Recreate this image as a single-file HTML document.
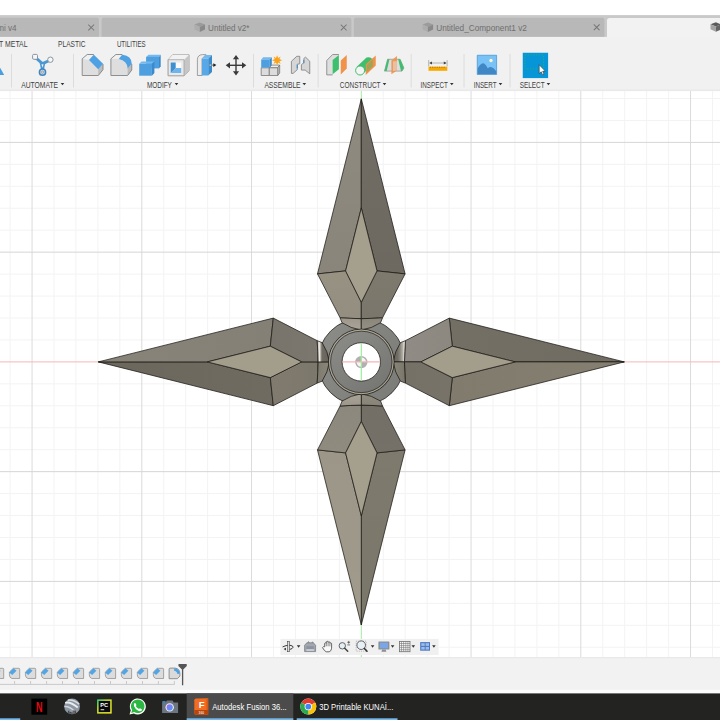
<!DOCTYPE html>
<html lang="en">
<head>
<meta charset="utf-8">
<title>Autodesk Fusion 360</title>
<style>
html,body{margin:0;padding:0;background:#fff}
body{width:720px;height:720px;overflow:hidden;position:relative;font-family:"Liberation Sans",sans-serif}
svg{position:absolute;left:0;top:0;display:block}
text{font-family:"Liberation Sans",sans-serif}
.lbl{font-size:8.2px;fill:#3e3e3e}
.tab{font-size:9px;fill:#6f6f6f}
.task{font-size:9.2px;fill:#fff}
</style>
</head>
<body>
<svg width="720" height="720" viewBox="0 0 720 720">

<rect x="0" y="0" width="720" height="720" fill="#fff"/>
<g id="grid" fill="none" stroke-width="1">
<path d="M10.1 91V658M54 91V658M75.95 91V658M97.9 91V658M119.85 91V658M163.75 91V658M185.7 91V658M207.65 91V658M229.6 91V658M273.5 91V658M295.45 91V658M317.4 91V658M339.35 91V658M383.25 91V658M405.2 91V658M427.15 91V658M449.1 91V658M493 91V658M514.95 91V658M536.9 91V658M558.85 91V658M602.75 91V658M624.7 91V658M646.65 91V658M668.6 91V658M712.5 91V658" stroke="#f3f3f3"/>
<path d="M0 98.5H720M0 120.45H720M0 164.35H720M0 186.3H720M0 208.25H720M0 230.2H720M0 274.1H720M0 296.05H720M0 318H720M0 339.95H720M0 383.85H720M0 405.8H720M0 427.75H720M0 449.7H720M0 493.6H720M0 515.55H720M0 537.5H720M0 559.45H720M0 603.35H720M0 625.3H720M0 647.25H720" stroke="#f3f3f3"/>
<path d="M32.05 91V658M141.8 91V658M251.55 91V658M471.05 91V658M580.8 91V658M690.55 91V658" stroke="#dbdbdb"/>
<path d="M0 142.4H720M0 252.15H720M0 471.65H720M0 581.4H720" stroke="#d6d6d6"/>
</g>
<path d="M0 361.9H720" stroke="#f4b8b8" stroke-width="1" fill="none"/>
<path d="M361.3 91V658" stroke="#a6e8a6" stroke-width="1" fill="none"/>
<defs>
<linearGradient id="ringg" x1="0.1" y1="0" x2="0.9" y2="1"><stop offset="0" stop-color="#8c8c89"/><stop offset="0.5" stop-color="#80807d"/><stop offset="1" stop-color="#747471"/></linearGradient>
<linearGradient id="colg" x1="0" y1="0.2" x2="1" y2="0.8"><stop offset="0" stop-color="#8b8b88"/><stop offset="1" stop-color="#7b7b78"/></linearGradient>
<linearGradient id="tOL" gradientUnits="userSpaceOnUse" x1="0" y1="-263" x2="0" y2="-88"><stop offset="0" stop-color="#8f8b80"/><stop offset="1" stop-color="#89857a"/></linearGradient>
<linearGradient id="tOR" gradientUnits="userSpaceOnUse" x1="0" y1="-263" x2="0" y2="-88"><stop offset="0" stop-color="#716d64"/><stop offset="1" stop-color="#6d6960"/></linearGradient>
<linearGradient id="tIL" gradientUnits="userSpaceOnUse" x1="0" y1="-92" x2="0" y2="-44"><stop offset="0" stop-color="#989283"/><stop offset="1" stop-color="#938e80"/></linearGradient>
<linearGradient id="tIR" gradientUnits="userSpaceOnUse" x1="0" y1="-92" x2="0" y2="-44"><stop offset="0" stop-color="#7f7a6e"/><stop offset="1" stop-color="#7a766b"/></linearGradient>
<linearGradient id="tFL" gradientUnits="userSpaceOnUse" x1="0" y1="-44.5" x2="0" y2="-32.5"><stop offset="0" stop-color="#9c978a"/><stop offset="1" stop-color="#aaa598"/></linearGradient>
<linearGradient id="tFR" gradientUnits="userSpaceOnUse" x1="0" y1="-44.5" x2="0" y2="-32.5"><stop offset="0" stop-color="#8a8579"/><stop offset="1" stop-color="#959084"/></linearGradient>
<linearGradient id="rOL" gradientUnits="userSpaceOnUse" x1="0" y1="-263" x2="0" y2="-88"><stop offset="0" stop-color="#706c62"/><stop offset="1" stop-color="#736f65"/></linearGradient>
<linearGradient id="rOR" gradientUnits="userSpaceOnUse" x1="0" y1="-263" x2="0" y2="-88"><stop offset="0" stop-color="#857f71"/><stop offset="1" stop-color="#817b6e"/></linearGradient>
<linearGradient id="rIL" gradientUnits="userSpaceOnUse" x1="0" y1="-92" x2="0" y2="-44"><stop offset="0" stop-color="#8c8880"/><stop offset="1" stop-color="#908c85"/></linearGradient>
<linearGradient id="rIR" gradientUnits="userSpaceOnUse" x1="0" y1="-92" x2="0" y2="-44"><stop offset="0" stop-color="#787368"/><stop offset="1" stop-color="#767166"/></linearGradient>
<linearGradient id="rFL" gradientUnits="userSpaceOnUse" x1="0" y1="-44.5" x2="0" y2="-32.5"><stop offset="0" stop-color="#c4c1b9"/><stop offset="0.12" stop-color="#eeece7"/><stop offset="0.26" stop-color="#b3b0a6"/><stop offset="0.47" stop-color="#8a867c"/><stop offset="0.7" stop-color="#6f6c64"/><stop offset="1" stop-color="#6a675f"/></linearGradient>
<linearGradient id="rFR" gradientUnits="userSpaceOnUse" x1="0" y1="-44.5" x2="0" y2="-32.5"><stop offset="0" stop-color="#7a7569"/><stop offset="1" stop-color="#8a8579"/></linearGradient>
<linearGradient id="bOL" gradientUnits="userSpaceOnUse" x1="0" y1="-263" x2="0" y2="-88"><stop offset="0" stop-color="#7b766a"/><stop offset="1" stop-color="#7f7a6e"/></linearGradient>
<linearGradient id="bOR" gradientUnits="userSpaceOnUse" x1="0" y1="-263" x2="0" y2="-88"><stop offset="0" stop-color="#a09b8c"/><stop offset="1" stop-color="#9b9687"/></linearGradient>
<linearGradient id="bIL" gradientUnits="userSpaceOnUse" x1="0" y1="-92" x2="0" y2="-44"><stop offset="0" stop-color="#767168"/><stop offset="1" stop-color="#736f66"/></linearGradient>
<linearGradient id="bIR" gradientUnits="userSpaceOnUse" x1="0" y1="-92" x2="0" y2="-44"><stop offset="0" stop-color="#8f8b7f"/><stop offset="1" stop-color="#8c887d"/></linearGradient>
<linearGradient id="bFL" gradientUnits="userSpaceOnUse" x1="0" y1="-44.5" x2="0" y2="-32.5"><stop offset="0" stop-color="#878276"/><stop offset="1" stop-color="#918c80"/></linearGradient>
<linearGradient id="bFR" gradientUnits="userSpaceOnUse" x1="0" y1="-44.5" x2="0" y2="-32.5"><stop offset="0" stop-color="#9b9689"/><stop offset="1" stop-color="#a8a396"/></linearGradient>
<linearGradient id="lOL" gradientUnits="userSpaceOnUse" x1="0" y1="-263" x2="0" y2="-88"><stop offset="0" stop-color="#6b675d"/><stop offset="1" stop-color="#6f6b61"/></linearGradient>
<linearGradient id="lOR" gradientUnits="userSpaceOnUse" x1="0" y1="-263" x2="0" y2="-88"><stop offset="0" stop-color="#88847a"/><stop offset="1" stop-color="#848075"/></linearGradient>
<linearGradient id="lIL" gradientUnits="userSpaceOnUse" x1="0" y1="-92" x2="0" y2="-44"><stop offset="0" stop-color="#807b6e"/><stop offset="1" stop-color="#7d786c"/></linearGradient>
<linearGradient id="lIR" gradientUnits="userSpaceOnUse" x1="0" y1="-92" x2="0" y2="-44"><stop offset="0" stop-color="#78746b"/><stop offset="1" stop-color="#7b776e"/></linearGradient>
<linearGradient id="lFL" gradientUnits="userSpaceOnUse" x1="0" y1="-44.5" x2="0" y2="-32.5"><stop offset="0" stop-color="#7f7a6e"/><stop offset="1" stop-color="#8b867a"/></linearGradient>
<linearGradient id="lFR" gradientUnits="userSpaceOnUse" x1="0" y1="-44.5" x2="0" y2="-32.5"><stop offset="0" stop-color="#807c72"/><stop offset="0.11" stop-color="#cdcac2"/><stop offset="0.24" stop-color="#ecebe5"/><stop offset="0.34" stop-color="#a5a198"/><stop offset="0.43" stop-color="#706c64"/><stop offset="1" stop-color="#67635c"/></linearGradient>
</defs>
<g id="model">
<circle cx="361.3" cy="361.9" r="43.5" fill="url(#colg)" stroke="#1c1a16" stroke-width="0.75"/>
<g id="arm-top" transform="translate(361.3 361.9) rotate(0)" stroke="#1c1a16" stroke-width="0.75" stroke-linejoin="round"><path d="M0 -263 L-43.8 -88 L-15.7 -91 L0 -154 Z" fill="url(#tOL)"/><path d="M0 -263 L43.8 -88 L15.7 -91 L0 -154 Z" fill="url(#tOR)"/><path d="M-43.8 -88 L-21.2 -44.1 Q-10.6 -43.400000000000006 0 -43.2 L0 -59.6 L-15.7 -91 Z" fill="url(#tIL)"/><path d="M43.8 -88 L21.2 -44.1 Q10.6 -43.400000000000006 0 -43.2 L0 -59.6 L15.7 -91 Z" fill="url(#tIR)"/><path d="M0 -154 L-15.7 -91 L0 -59.6 L15.7 -91 Z" fill="#a59f8e"/><path d="M-21.2 -44.1 Q-10.6 -43.400000000000006 0 -43.2 L0 -31.9 Q-10.5 -33.35 -19.3 -39.2 Z" fill="url(#tFL)"/><path d="M21.2 -44.1 Q10.6 -43.400000000000006 0 -43.2 L0 -31.9 Q10.5 -33.35 19.3 -39.2 Z" fill="url(#tFR)"/></g>
<g id="arm-right" transform="translate(361.3 361.9) rotate(90)" stroke="#1c1a16" stroke-width="0.75" stroke-linejoin="round"><path d="M0 -263 L-43.8 -88 L-15.7 -91 L0 -154 Z" fill="url(#rOL)"/><path d="M0 -263 L43.8 -88 L15.7 -91 L0 -154 Z" fill="url(#rOR)"/><path d="M-43.8 -88 L-21.2 -44.1 Q-10.6 -43.400000000000006 0 -43.2 L0 -59.6 L-15.7 -91 Z" fill="url(#rIL)"/><path d="M43.8 -88 L21.2 -44.1 Q10.6 -43.400000000000006 0 -43.2 L0 -59.6 L15.7 -91 Z" fill="url(#rIR)"/><path d="M0 -154 L-15.7 -91 L0 -59.6 L15.7 -91 Z" fill="#a39d8c"/><path d="M-21.2 -44.1 Q-10.6 -43.400000000000006 0 -43.2 L0 -31.9 Q-10.5 -33.35 -19.3 -39.2 Z" fill="url(#rFL)"/><path d="M21.2 -44.1 Q10.6 -43.400000000000006 0 -43.2 L0 -31.9 Q10.5 -33.35 19.3 -39.2 Z" fill="url(#rFR)"/></g>
<g id="arm-bottom" transform="translate(361.3 361.9) rotate(180)" stroke="#1c1a16" stroke-width="0.75" stroke-linejoin="round"><path d="M0 -263 L-43.8 -88 L-15.7 -91 L0 -154 Z" fill="url(#bOL)"/><path d="M0 -263 L43.8 -88 L15.7 -91 L0 -154 Z" fill="url(#bOR)"/><path d="M-43.8 -88 L-21.2 -44.1 Q-10.6 -43.400000000000006 0 -43.2 L0 -59.6 L-15.7 -91 Z" fill="url(#bIL)"/><path d="M43.8 -88 L21.2 -44.1 Q10.6 -43.400000000000006 0 -43.2 L0 -59.6 L15.7 -91 Z" fill="url(#bIR)"/><path d="M0 -154 L-15.7 -91 L0 -59.6 L15.7 -91 Z" fill="#a59f8e"/><path d="M-21.2 -44.1 Q-10.6 -43.400000000000006 0 -43.2 L0 -31.9 Q-10.5 -33.35 -19.3 -39.2 Z" fill="url(#bFL)"/><path d="M21.2 -44.1 Q10.6 -43.400000000000006 0 -43.2 L0 -31.9 Q10.5 -33.35 19.3 -39.2 Z" fill="url(#bFR)"/></g>
<g id="arm-left" transform="translate(361.3 361.9) rotate(270)" stroke="#1c1a16" stroke-width="0.75" stroke-linejoin="round"><path d="M0 -263 L-43.8 -88 L-15.7 -91 L0 -154 Z" fill="url(#lOL)"/><path d="M0 -263 L43.8 -88 L15.7 -91 L0 -154 Z" fill="url(#lOR)"/><path d="M-43.8 -88 L-21.2 -44.1 Q-10.6 -43.400000000000006 0 -43.2 L0 -59.6 L-15.7 -91 Z" fill="url(#lIL)"/><path d="M43.8 -88 L21.2 -44.1 Q10.6 -43.400000000000006 0 -43.2 L0 -59.6 L15.7 -91 Z" fill="url(#lIR)"/><path d="M0 -154 L-15.7 -91 L0 -59.6 L15.7 -91 Z" fill="#a39d8c"/><path d="M-21.2 -44.1 Q-10.6 -43.400000000000006 0 -43.2 L0 -31.9 Q-10.5 -33.35 -19.3 -39.2 Z" fill="url(#lFL)"/><path d="M21.2 -44.1 Q10.6 -43.400000000000006 0 -43.2 L0 -31.9 Q10.5 -33.35 19.3 -39.2 Z" fill="url(#lFR)"/></g>
<circle cx="361.3" cy="361.9" r="32.8" fill="url(#ringg)" stroke="#1c1a16" stroke-width="0.75"/>
<circle cx="361.3" cy="361.9" r="31.7" fill="none" stroke="#b7af93" stroke-width="0.9"/>
<circle cx="361.3" cy="361.9" r="30.7" fill="none" stroke="#1c1a16" stroke-width="0.6"/>
<circle cx="361.3" cy="361.9" r="19.2" fill="#fff" stroke="#1c1a16" stroke-width="0.75"/>
<circle cx="361.3" cy="362.1" r="6.2" fill="#a2a2a2" fill-opacity="0.85"/>
<path d="M361.3 362.1 h-4.7 a4.7 4.7 0 0 0 4.7 4.7z M361.3 362.1 h4.7 a4.7 4.7 0 0 0 -4.7 -4.7z" fill="#fafafa" fill-opacity="0.95"/>
<path d="M342.5 361.9H380.1" stroke="#f7b4b8" stroke-width="1.3" fill="none"/>
<path d="M361.3 343.1V380.7" stroke="#9eea9e" stroke-width="1.2" fill="none"/>
</g>
<!-- ================= top chrome ================= -->
<g id="topchrome">
<rect x="0" y="0" width="720" height="15.2" fill="#fff"/>
<rect x="0" y="15.1" width="720" height="22" fill="#c9c9c9"/>
<path d="M0 37V17.700H97a2 2 0 0 1 2 2V37Z" fill="#b8b8b8"/>
<path d="M101.600 37V19.700a2 2 0 0 1 2 -2H349.400a2 2 0 0 1 2 2V37Z" fill="#b8b8b8"/>
<path d="M353.800 37V19.700a2 2 0 0 1 2 -2H602.400a2 2 0 0 1 2 2V37Z" fill="#b8b8b8"/>
<rect x="0" y="36.9" width="720" height="54.1" fill="#f1f1f1"/>
<path d="M607 37V20.500a2.600 2.600 0 0 1 2.600 -2.600H720V37Z" fill="#f2f2f2"/>
<rect x="0" y="89.600" width="720" height="1.500" fill="#e9e9e9"/>
<!-- tab labels -->
<text class="tab" x="-2.8" y="30.6" textLength="19.3" lengthAdjust="spacingAndGlyphs">mi v4</text>
<text class="tab" x="208.1" y="30.6" textLength="41.3" lengthAdjust="spacingAndGlyphs">Untitled v2*</text>
<text class="tab" x="436.2" y="30.6" textLength="90.7" lengthAdjust="spacingAndGlyphs">Untitled_Component1 v2</text>
<!-- tab close marks -->
<g stroke="#777" stroke-width="1.05" fill="none" stroke-linecap="square">
<path d="M88.7 25l5 5M93.700 25l-5 5"/>
<path d="M341.2 25l5 5M346.200 25l-5 5"/>
<path d="M594.2 24.800l5 5M599.200 24.800l-5 5"/>
</g>
<!-- tab cube glyphs -->
<g id="cubeA" stroke="none">
<path d="M194.400 24.600l5.400-2.100 5.200 2.100-5.200 2.300z" fill="#9b9b9b"/>
<path d="M194.400 24.600l5.400 2.300v5l-5.400-2.400z" fill="#adadad"/>
<path d="M199.800 26.900l5.200-2.300v4.900l-5.200 2.400z" fill="#898989"/>
</g>
<g stroke="none">
<path d="M422.500 24.600l5.400-2.100 5.200 2.100-5.200 2.300z" fill="#9b9b9b"/>
<path d="M422.500 24.600l5.400 2.300v5l-5.400-2.400z" fill="#adadad"/>
<path d="M427.900 26.900l5.200-2.300v4.900l-5.200 2.400z" fill="#898989"/>
</g>
<g stroke="none">
<path d="M710.500 24.300l5.400-2 5.200 2-5.200 2.200z" fill="#5c5c5c"/>
<path d="M710.500 24.300l5.400 2.200v5.200l-5.400-2.400z" fill="#a4a4a4"/>
<path d="M715.900 26.500l5.200-2.200v5.100l-5.200 2.300z" fill="#666"/>
</g>
<!-- ribbon tab names -->
<text class="lbl" x="-19.600" y="46.900" textLength="47.1" lengthAdjust="spacingAndGlyphs">SHEET METAL</text>
<text class="lbl" x="58.1" y="46.900" textLength="27.5" lengthAdjust="spacingAndGlyphs">PLASTIC</text>
<text class="lbl" x="116.900" y="46.900" textLength="28.7" lengthAdjust="spacingAndGlyphs">UTILITIES</text>
<!-- separators -->
<path d="M11.5 54V87.500M73.500 54V87.500M253.500 54V87.500M318.100 54V87.500M411.200 54V87.500M464 54V87.500M510 54V87.500" stroke="#dcdcdc" stroke-width="1" fill="none"/>
<!-- panel labels -->
<g class="lbl">
<text x="21.2" y="87.5" textLength="36.9" lengthAdjust="spacingAndGlyphs">AUTOMATE</text>
<text x="146.900" y="87.5" textLength="25" lengthAdjust="spacingAndGlyphs">MODIFY</text>
<text x="264.400" y="87.5" textLength="36.2" lengthAdjust="spacingAndGlyphs">ASSEMBLE</text>
<text x="339.700" y="87.5" textLength="40.9" lengthAdjust="spacingAndGlyphs">CONSTRUCT</text>
<text x="420.600" y="87.5" textLength="27.2" lengthAdjust="spacingAndGlyphs">INSPECT</text>
<text x="473.700" y="87.5" textLength="22.8" lengthAdjust="spacingAndGlyphs">INSERT</text>
<text x="519.700" y="87.5" textLength="24.9" lengthAdjust="spacingAndGlyphs">SELECT</text>
</g>
<!-- dropdown carets -->
<path d="M60.700 83.1h3.600l-1.800 2.100zM174.700 83.1h3.600l-1.800 2.100zM302.500 83.1h3.600l-1.800 2.100zM382.700 83.1h3.600l-1.800 2.100zM450 83.1h3.600l-1.800 2.100zM498.700 83.1h3.600l-1.800 2.100zM546.600 83.1h3.600l-1.800 2.100z" fill="#333"/>
</g>

<!-- ================= ribbon icons ================= -->
<g id="ribbon-icons" stroke-linejoin="round">
<!-- partially visible icon at left edge -->
<path d="M-2 64L4.200 75.100H-2Z" fill="#4a9fe0"/>
<!-- automate -->
<g>
<path d="M35.500 57.600L42.500 63.600L50 60.200" stroke="#4a97d2" stroke-width="2.800" fill="none"/>
<path d="M39.600 62.400h5.800l-1.500 7.600h-2.800z" fill="#4a97d2"/>
<path d="M41.500 64.300h2l-1 3.500z" fill="#eef4fa"/>
<rect x="32.600" y="54.400" width="4.900" height="4.900" rx="1.100" fill="#f7f7f7" stroke="#7f8b97" stroke-width="0.9"/>
<circle cx="50.400" cy="59.700" r="2.700" fill="#f7f7f7" stroke="#7f8b97" stroke-width="0.9"/>
<circle cx="42.500" cy="72.200" r="3.100" fill="#cfd6dd" stroke="#3f86c0" stroke-width="1.500"/>
<circle cx="42.500" cy="72.200" r="1.200" fill="none" stroke="#7f8b97" stroke-width="0.600"/>
</g>
<!-- chamfer -->
<g>
<path d="M82.200 75.500V58.800L87.200 54.500H93.800L103 63.800V69.700L98.300 75.500Z" fill="#dedede"/>
<path d="M82.200 58.800L87.200 54.500H93.800L89 60Z" fill="#f0f0f0"/>
<path d="M98.200 69.200L103 63.800V69.700L98.300 75.500Z" fill="#bdbdbd"/>
<path d="M89 60L93.800 54.700L103 63.800L98.200 69.200Z" fill="#4ea1e2"/>
<path d="M93.800 54.500H87.200L82.200 58.800V75.500H98.300L103 69.700V64" fill="none" stroke="#858585" stroke-width="0.9"/>
</g>
<!-- fillet -->
<g>
<path d="M110.900 75.500V58.800L115.900 54.500H122.200Q131.700 55.500 131.750 63.800V70L127.600 75.500Z" fill="#dedede"/>
<path d="M110.900 58.800L115.900 54.500H122.200L118.800 58.800Z" fill="#f0f0f0"/>
<path d="M127.600 68.400L131.750 63.800V70L127.600 75.500Z" fill="#bdbdbd"/>
<path d="M118.800 58.900L122.200 54.700Q131.600 55.600 131.750 63.800L127.700 68.400Q127.200 60.500 118.800 58.900Z" fill="#4ea1e2"/>
<path d="M122.200 54.500H115.900L110.900 58.800V75.500H127.600L131.750 70V64" fill="none" stroke="#858585" stroke-width="0.9"/>
</g>
<!-- combine -->
<g stroke="none">
<path d="M146.100 56.900L148.500 54.700H160.700L159 56.900Z" fill="#74b9ee"/>
<path d="M159 56.900L160.700 54.700V66.200L159 68.400Z" fill="#3b8bcc"/>
<rect x="146.100" y="56.900" width="12.900" height="11.500" fill="#4d9fdf"/>
<path d="M139.200 63.800L141.500 61.400H154.400L151.900 63.800Z" fill="#74b9ee"/>
<path d="M151.900 63.800L154.400 61.400V73L151.900 75.700Z" fill="#3b8bcc"/>
<rect x="139.200" y="63.800" width="12.700" height="11.900" fill="#4d9fdf"/>
</g>
<!-- shell -->
<g stroke="#8a8a8a" stroke-width="0.8">
<path d="M168.200 59.700L172.800 54.700H189V70.900L184 75.700H168.200Z" fill="#e4e4e4"/>
<path d="M184 59.700L189 54.700V70.900L184 75.700Z" fill="#c6c6c6" stroke="none"/>
<path d="M168.200 59.700L172.800 54.700H189L184 59.700Z" fill="#f2f2f2" stroke="none"/>
<rect x="168.200" y="59.700" width="15.800" height="16" fill="#e9e9e9" stroke="#9c9c9c" stroke-width="0.7"/>
<rect x="170.700" y="62.600" width="10.500" height="10.500" fill="#fbfbfb" stroke="none"/>
<path d="M170.700 62.600H175.700V68L173.600 70.500L170.700 73.100Z" fill="#3d8fd0" stroke="none"/>
<path d="M175.700 68H181.200V73.100H170.700Z" fill="#6db5ec" stroke="none"/>
</g>
<!-- press pull -->
<g>
<path d="M197.400 75.500V59.500Q197.600 54.900 202.400 54.600H206L202 58.800V75.500Z" fill="#ededed" stroke="#8a8a8a" stroke-width="0.8"/>
<path d="M202 58.800L205.400 55.100H212L208.200 58.800Z" fill="#74b9ee"/>
<path d="M208.200 58.800L212 55.100V72.100L208.200 75.500Z" fill="#3b8bcc"/>
<rect x="202" y="58.800" width="6.200" height="16.700" fill="#58a7e6"/>
<path d="M209.600 65.100H211.600" stroke="#d8d8d8" stroke-width="1.200" fill="none"/>
<path d="M211.400 65.100H214" stroke="#555" stroke-width="0.9" fill="none"/>
<path d="M213.300 63.200L216.400 65.100L213.300 67Z" fill="#222"/>
</g>
<!-- move -->
<g fill="#3a3a3a" stroke="none">
<rect x="235.300" y="58" width="1.400" height="14.600"/>
<rect x="228.600" y="64.600" width="14.800" height="1.400"/>
<path d="M236 55l3.100 4.300h-6.200zM236 75.600l3.100-4.300h-6.200zM225.700 65.300l4.300-3.100v6.200zM246.300 65.300l-4.300-3.100v6.200z"/>
</g>
<!-- new component -->
<g>
<g stroke="#777" stroke-width="0.8">
<rect x="261.200" y="67.800" width="8.100" height="7.700" fill="#dcdcdc"/>
<path d="M269.300 67.800L271.800 65.100H279.700L277.700 67.800Z" fill="#efefef"/>
<path d="M277.700 67.800L279.700 65.100V73L277.700 75.500Z" fill="#c2c2c2"/>
<rect x="269.300" y="67.800" width="8.400" height="7.700" fill="#dcdcdc"/>
</g>
<path d="M261.200 59.700L263.100 57.300H271.800L269.300 59.700Z" fill="#74b9ee"/>
<path d="M269.300 59.700L271.800 57.300V65.100L269.300 67.600Z" fill="#3b8bcc"/>
<rect x="261.200" y="59.700" width="8.100" height="7.900" fill="#4d9fdf"/>
<path d="M277.100 55.200l1.100 2.700 2.500-1.400-1.300 2.600 2.800 1.100-2.800 1.100 1.300 2.600-2.500-1.400-1.100 2.800-1.100-2.800-2.500 1.400 1.300-2.600-2.800-1.100 2.800-1.100-1.300-2.600 2.500 1.400z" fill="#f9a21a"/>
</g>
<!-- joint -->
<g stroke="#7c7c7c" stroke-width="0.8">
<path d="M291.400 61.300L296.800 56.300H299.750V63.800L297.250 64.250V69.700L293.100 73.400H291.400Z" fill="#d6d6d6"/>
<path d="M301.400 64.700L303.900 62.600V58.400L305.600 57.200L309.750 61.300V73.800L305.200 70.100H301.400Z" fill="#d6d6d6"/>
<path d="M297.300 64.800V68.200M303.800 60V63.300" stroke="#3d8fd0" stroke-width="1.100" fill="none"/>
</g>
<!-- construct: offset plane -->
<g>
<path d="M326.750 74.900V60.500L332.600 54.500H338.900V54.900L332.600 59.900V74.900Z" fill="#dedede"/>
<path d="M338.900 54.500H332.600L326.750 60.500V74.900H332.600" fill="none" stroke="#8a8a8a" stroke-width="0.9"/>
<path d="M332.600 59.900L338.900 54.900V69.250L332.600 74.250Z" fill="#3dbf6e"/>
<path d="M340.750 60.500L346.750 54.900V68.600L340.750 74.600Z" fill="#f0924a"/>
</g>
<!-- construct: tangent plane -->
<g>
<path d="M356.500 67L366.500 57.500Q371.500 56 373.500 61L364.700 72.500Z" fill="#3dbf6e"/>
<circle cx="360.100" cy="70.500" r="4.500" fill="#f4f4f4" stroke="#3dbf6e" stroke-width="1"/>
<path d="M365.750 64.250L375.750 55.500V65.500L365.750 74.900Z" fill="#f0924a"/>
<path d="M366.700 65L372.800 59.600V66.300L366.700 72Z" fill="#8fa85a" opacity="0.85"/>
</g>
<!-- construct: midplane -->
<g>
<path d="M384.500 71.100L387.600 59.250H400.100L403.900 68L402 71.100Z" fill="#dddddd" stroke="#8a8a8a" stroke-width="0.700"/>
<path d="M384.500 71.100L387.600 59.250H389.400L386.700 71.100Z" fill="#3dbf6e"/>
<path d="M398.200 59.250H400.100L403.900 68L402 71.100L401 71.100Z" fill="#3dbf6e"/>
<path d="M391.400 60.500L397 56.100V70.500L391.400 74.250Z" fill="#f0924a" opacity="0.9"/>
<path d="M393 61.300H396.900V70.400L393 71.100Z" fill="#e6cbb8" opacity="0.8"/>
</g>
<!-- inspect -->
<g>
<rect x="428.500" y="66.700" width="18.800" height="4.100" fill="#f9a800"/>
<path d="M430.400 66.700v1.300M432.700 66.700v1.300M435 66.700v1.300M437.300 66.700v1.300M439.600 66.700v1.300M441.900 66.700v1.300M444.200 66.700v1.300" stroke="#a46a00" stroke-width="0.700" fill="none"/>
<path d="M428.700 60.100V66.400M447.100 60.100V66.400" stroke="#b0b0b0" stroke-width="1" fill="none"/>
<path d="M430 63H446" stroke="#b0b0b0" stroke-width="1" fill="none"/>
<path d="M429.200 63l2.800-1.500v3zM446.600 63l-2.800-1.500v3z" fill="#444"/>
</g>
<!-- insert -->
<g>
<rect x="477.250" y="55.250" width="19.350" height="19.250" fill="#79c2f7" stroke="#4a98d6" stroke-width="0.8"/>
<path d="M477.650 74.100V68.400Q480.300 63.500 482.900 63.300Q485.200 63.400 487.700 68.300Q490 66.600 491.700 67.300Q493.800 68 496.200 71.200V74.100Z" fill="#3f88c5"/>
<circle cx="491" cy="60.500" r="1.700" fill="#fdf6c4"/>
</g>
<!-- select -->
<g>
<rect x="522.750" y="52.750" width="25.350" height="25.350" fill="#0696d7"/>
<rect x="524.900" y="54.900" width="18.600" height="13.900" fill="none" stroke="#22ad86" stroke-width="0.9" stroke-dasharray="1.400 1.400"/>
<path d="M539.200 64.800V73.600L541.200 71.800L542.600 74.900L544 74.300L542.700 71.300L545.300 71.100Z" fill="#fff" stroke="#333" stroke-width="0.600"/>
</g>
</g>

<!-- ================= navigation bar ================= -->
<g id="navbar">
<rect x="280.400" y="638.900" width="158.200" height="16.100" fill="#f0f0f0"/>
<!-- orbit -->
<g>
<path d="M282.600 646.900Q285.800 645.100 290 645.300Q293.300 645.700 293.100 647.200Q292.700 648.800 289.600 649.500" fill="none" stroke="#3a3a3a" stroke-width="1"/>
<path d="M283.700 649.100L285.900 647.700V650.500Z" fill="#222"/>
<rect x="287.600" y="641.500" width="1.700" height="10.200" fill="#dcdcdc" stroke="#444" stroke-width="0.600"/>
</g>
<!-- look at -->
<g>
<path d="M304.600 651.600V645.300L306.800 642.800H313.400L315.600 645.300V651.600Z" fill="#a3a8ae" stroke="#70767c" stroke-width="0.700"/>
<path d="M308 642.800l0.500-1.200 0.600 1.200M312 642.800l0.500-1 0.600 1" stroke="#70767c" stroke-width="0.800" fill="none"/>
<rect x="306.400" y="646.200" width="7.500" height="3.200" fill="#8b93a3"/>
<rect x="306.400" y="649.400" width="7.500" height="1.200" fill="#e4e6e8"/>
</g>
<!-- pan -->
<g>
<path d="M324.700 646.800V643.300Q325.500 642.300 326.300 643.300V641.800Q327.200 640.700 328.100 641.800V642.200Q329 641.200 329.900 642.300V643.200Q330.800 642.400 331.600 643.400V648.200Q331.400 651.200 329.200 651.800H326.200Q324.500 651.200 322.500 647.600Q323.300 646.200 324.700 646.800Z" fill="#f9f9f9" stroke="#444" stroke-width="0.8"/>
<path d="M326.300 643.300V646.300M328.100 642.200V646.300M329.900 643.200V646.300" fill="none" stroke="#444" stroke-width="0.600"/>
</g>
<!-- zoom -->
<g>
<circle cx="342.300" cy="645.800" r="3.200" fill="#e3eef5" stroke="#555" stroke-width="0.9"/>
<path d="M344.700 648.200L347.700 651.200" stroke="#444" stroke-width="1.500" fill="none" stroke-linecap="round"/>
<path d="M347.300 642.300h2.800M348.700 640.900v2.800M347.300 644.900h2.800" stroke="#444" stroke-width="0.700" fill="none"/>
</g>
<!-- zoom window -->
<g>
<rect x="356.200" y="641.200" width="10" height="10" fill="none" stroke="#8a8a8a" stroke-width="0.600" stroke-dasharray="1 1.200"/>
<circle cx="361.200" cy="645.200" r="4.300" fill="#e6f0f5" stroke="#555" stroke-width="0.9"/>
<path d="M364.400 648.500L367 651.200" stroke="#333" stroke-width="1.600" fill="none" stroke-linecap="round"/>
</g>
<!-- display settings -->
<g>
<rect x="378.400" y="641.500" width="11" height="8" rx="0.600" fill="#8a8f96"/>
<rect x="379.800" y="642.700" width="8.200" height="5.600" fill="#7aa6e6"/>
<path d="M382.200 649.500h3.400l0.800 2.200h-5z" fill="#8a8f96"/>
</g>
<!-- grid -->
<g>
<rect x="399.400" y="641.500" width="10.600" height="10.200" fill="#fafafa" stroke="#6f6f6f" stroke-width="0.800"/>
<path d="M401.500 641.500v10.200M403.600 641.500v10.200M405.800 641.500v10.200M407.900 641.500v10.200M399.400 643.500h10.600M399.400 645.600h10.600M399.400 647.600h10.600M399.400 649.700h10.600" stroke="#777" stroke-width="0.600" fill="none"/>
</g>
<!-- viewports -->
<g>
<rect x="420.200" y="642.100" width="9.800" height="8.600" fill="#4a78bf"/>
<rect x="421.300" y="643.200" width="3.400" height="2.700" fill="#9dbcec"/>
<rect x="425.600" y="643.200" width="3.400" height="2.700" fill="#9dbcec"/>
<rect x="421.300" y="646.900" width="3.400" height="2.700" fill="#9dbcec"/>
<rect x="425.600" y="646.900" width="3.400" height="2.700" fill="#9dbcec"/>
</g>
<path d="M296.800 645.200h3.600l-1.800 2.500zM370.800 645.200h3.600l-1.800 2.500zM390.800 645.200h3.600l-1.800 2.500zM411.500 645.200h3.600l-1.800 2.500zM432.100 645.200h3.600l-1.800 2.500z" fill="#333"/>
</g>
<!-- ================= timeline ================= -->
<g id="timeline">
<rect x="0" y="657.200" width="720" height="36.400" fill="#f2f2f2"/>
<rect x="0" y="657.200" width="720" height="1" fill="#e6e6e6"/>
<rect x="0" y="689.800" width="720" height="3.700" fill="#fdfdfd"/>
<path d="M0 684.400H174.600M14.600 681v3.400M30.600 681v3.400M46.600 681v3.400M62.500 681v3.400M78.500 681v3.400M94.500 681v3.400M110.500 681v3.400M126.500 681v3.400M142.500 681v3.400M158.400 681v3.400M174.400 681v3.400" stroke="#c4c4c4" stroke-width="0.9" fill="none"/>
<g transform="translate(-6.800 668.100)"><path d="M4.100 0.200H9.600Q10.500 0.200 10.500 1.100V10.400H2.700Q0.200 9.600 0.200 6.800V4Z" fill="#dcdcdc" stroke="#8c8c8c" stroke-width="0.75"/><path d="M0 4.500L4.300 0.200L7.300 2.700L3 6.900Z" fill="#52a5e5"/></g>
<g transform="translate(9.200 668.100)"><path d="M4.100 0.200H9.600Q10.500 0.200 10.500 1.100V10.400H2.700Q0.200 9.600 0.200 6.800V4Z" fill="#dcdcdc" stroke="#8c8c8c" stroke-width="0.75"/><path d="M0 4.500L4.300 0.200L7.300 2.700L3 6.900Z" fill="#52a5e5"/></g>
<g transform="translate(25.200 668.100)"><path d="M4.100 0.200H9.600Q10.500 0.200 10.500 1.100V10.400H2.700Q0.200 9.600 0.200 6.800V4Z" fill="#dcdcdc" stroke="#8c8c8c" stroke-width="0.75"/><path d="M0 4.500L4.300 0.200L7.300 2.700L3 6.900Z" fill="#52a5e5"/></g>
<g transform="translate(41.200 668.100)"><path d="M4.100 0.200H9.600Q10.500 0.200 10.500 1.100V10.400H2.700Q0.200 9.600 0.200 6.800V4Z" fill="#dcdcdc" stroke="#8c8c8c" stroke-width="0.75"/><path d="M0 4.500L4.300 0.200L7.300 2.700L3 6.900Z" fill="#52a5e5"/></g>
<g transform="translate(57.100 668.100)"><path d="M4.100 0.200H9.600Q10.500 0.200 10.500 1.100V10.400H2.700Q0.200 9.600 0.200 6.800V4Z" fill="#dcdcdc" stroke="#8c8c8c" stroke-width="0.75"/><path d="M0 4.500L4.300 0.200L7.300 2.700L3 6.900Z" fill="#52a5e5"/></g>
<g transform="translate(73.100 668.100)"><path d="M4.100 0.200H9.600Q10.500 0.200 10.500 1.100V10.400H2.700Q0.200 9.600 0.200 6.800V4Z" fill="#dcdcdc" stroke="#8c8c8c" stroke-width="0.75"/><path d="M0 4.500L4.300 0.200L7.300 2.700L3 6.900Z" fill="#52a5e5"/></g>
<g transform="translate(89.100 668.100)"><path d="M4.100 0.200H9.600Q10.500 0.200 10.500 1.100V10.400H2.700Q0.200 9.600 0.200 6.800V4Z" fill="#dcdcdc" stroke="#8c8c8c" stroke-width="0.75"/><path d="M0 4.500L4.300 0.200L7.300 2.700L3 6.900Z" fill="#52a5e5"/></g>
<g transform="translate(105.100 668.100)"><path d="M4.100 0.200H9.600Q10.500 0.200 10.500 1.100V10.400H2.700Q0.200 9.600 0.200 6.800V4Z" fill="#dcdcdc" stroke="#8c8c8c" stroke-width="0.75"/><path d="M0 4.500L4.300 0.200L7.300 2.700L3 6.900Z" fill="#52a5e5"/></g>
<g transform="translate(121.100 668.100)"><path d="M4.100 0.200H9.600Q10.500 0.200 10.500 1.100V10.400H2.700Q0.200 9.600 0.200 6.800V4Z" fill="#dcdcdc" stroke="#8c8c8c" stroke-width="0.75"/><path d="M0 4.500L4.300 0.200L7.300 2.700L3 6.900Z" fill="#52a5e5"/></g>
<g transform="translate(137.100 668.100)"><path d="M4.100 0.200H9.600Q10.500 0.200 10.500 1.100V10.400H2.700Q0.200 9.600 0.200 6.800V4Z" fill="#dcdcdc" stroke="#8c8c8c" stroke-width="0.75"/><path d="M0 4.500L4.300 0.200L7.300 2.700L3 6.900Z" fill="#52a5e5"/></g>
<g transform="translate(153.100 668.100)"><path d="M4.100 0.200H9.600Q10.500 0.200 10.500 1.100V10.400H2.700Q0.200 9.600 0.200 6.800V4Z" fill="#dcdcdc" stroke="#8c8c8c" stroke-width="0.75"/><path d="M0 4.500L4.300 0.200L7.300 2.700L3 6.900Z" fill="#52a5e5"/></g>
<g transform="translate(169.100 668.100)">
<path d="M1.100 0H6Q10.700 0.600 10.800 5.400V8L8.200 10.600H0V1.100Q0 0 1.100 0Z" fill="#dadada" stroke="#7a7a7a" stroke-width="0.8"/>
<path d="M5.400 0.200Q10.400 0.700 10.700 5.600L8.300 5.900Q7.900 3 4.700 2.400Z" fill="#4ea1e2"/>
</g>
<path d="M178.900 664.100H186.300Q186.800 664.100 186.800 664.700V665.900L183.250 669.400V685.200H181.950V669.400L178.400 665.900V664.700Q178.400 664.100 178.900 664.100Z" fill="#555"/>
</g>
<!-- ================= taskbar ================= -->
<g id="taskbar">
<rect x="0" y="693.400" width="720" height="26.600" fill="#232322"/>
<rect x="186.700" y="693.400" width="106.600" height="26.600" fill="#4b4b4b"/>
<rect x="0" y="718.300" width="20.200" height="1.700" fill="#76b9ed"/>
<rect x="186.700" y="718.300" width="106.600" height="1.700" fill="#76b9ed"/>
<rect x="296.700" y="718.300" width="100.800" height="1.700" fill="#76b9ed"/>
<!-- Netflix -->
<rect x="31.400" y="698.600" width="15.800" height="16.100" fill="#000"/>
<text x="36.100" y="712.300" font-size="15.400" font-weight="bold" fill="#e50914" textLength="6.600" lengthAdjust="spacingAndGlyphs">N</text>
<!-- Earth -->
<g>
<circle cx="72.100" cy="706.400" r="7.900" fill="#8d96a1"/>
<path d="M65.200 702.800Q70 701.200 77.800 707.600" stroke="#e9edf0" stroke-width="1.900" fill="none"/>
<path d="M67.800 700.200Q73 699.200 79.300 704.200" stroke="#d9dee3" stroke-width="1.400" fill="none"/>
<path d="M64.400 706.600Q68.500 705.800 73.500 710.300" stroke="#cfd5db" stroke-width="1.500" fill="none"/>
<rect x="68.300" y="710.400" width="7.600" height="3.200" rx="0.800" fill="#2f353b"/>
<text x="69.200" y="713" font-size="2.800" fill="#e8e8e8" textLength="5.800" lengthAdjust="spacingAndGlyphs">PRO</text>
</g>
<!-- PyCharm -->
<g>
<defs><linearGradient id="pcg" x1="0" y1="0" x2="1" y2="1"><stop offset="0" stop-color="#21d789"/><stop offset="0.350" stop-color="#c8e32a"/><stop offset="1" stop-color="#f1eb2b"/></linearGradient></defs>
<rect x="97.100" y="699.400" width="14.600" height="14.200" fill="url(#pcg)"/>
<rect x="98.600" y="700.900" width="11.600" height="11.200" fill="#0b0b0b"/>
<text x="100.300" y="706.900" font-size="5.600" font-weight="bold" fill="#fff" textLength="7.800" lengthAdjust="spacingAndGlyphs">PC</text>
<rect x="100.600" y="709.300" width="3.600" height="0.900" fill="#fff"/>
</g>
<!-- WhatsApp -->
<g>
<path d="M129.500 714.600L130.800 710.300A8 8 0 1 1 133.800 713.400Z" fill="#fff"/>
<path d="M131.200 712.900L132.100 710.100A6.800 6.800 0 1 1 134.200 712.100Z" fill="#2cb742"/>
<path d="M134.300 703.300Q135 702.500 135.700 703.400L136.400 704.900Q136.500 705.400 135.700 706.100Q136.800 708.300 139 709.100Q139.700 708.100 140.300 708.400L141.800 709.200Q142.300 709.700 141.500 710.700Q140.300 711.600 138.300 710.800Q135.300 709.500 134.100 706.300Q133.500 704.400 134.300 703.300Z" fill="#fff"/>
</g>
<!-- Camera -->
<g>
<defs><linearGradient id="lens" x1="0" y1="0" x2="1" y2="1"><stop offset="0" stop-color="#a66bf2"/><stop offset="1" stop-color="#3f9bff"/></linearGradient></defs>
<path d="M162.100 702.500H165.700L166.900 700.500H172.500L173.700 702.500H178.100V712.900H162.100Z" fill="#6d7680"/>
<rect x="162.400" y="701.200" width="3.200" height="1.500" fill="#3f9bd8"/>
<circle cx="169.700" cy="707.400" r="4.200" fill="#eef0f3"/>
<circle cx="169.700" cy="707.400" r="3.100" fill="url(#lens)"/>
</g>
<!-- Fusion 360 -->
<g>
<path d="M194.300 700.300Q194.300 698.700 196 698.600L208.200 698.300V714.700H196Q194.300 714.600 194.300 713Z" fill="#f26c21"/>
<path d="M194.300 710.100H208.200V714.700H196Q194.300 714.600 194.300 713Z" fill="#b8470d"/>
<path d="M208.200 698.300L206.400 699.500V710.100H208.200Z" fill="#d95a14"/>
<text x="198.700" y="707.600" font-size="9" font-weight="bold" fill="#fff" textLength="5.800" lengthAdjust="spacingAndGlyphs">F</text>
<text x="198.600" y="713.600" font-size="3.200" font-weight="bold" fill="#f6d6c0" textLength="5.400" lengthAdjust="spacingAndGlyphs">360</text>
</g>
<text class="task" x="212.200" y="709.600" textLength="74.500" lengthAdjust="spacingAndGlyphs">Autodesk Fusion 36...</text>
<!-- Chrome -->
<g>
<circle cx="308.300" cy="706.600" r="8" fill="#fff"/>
<path d="M308.300 706.600L301.372 702.600A8 8 0 0 1 315.228 702.600Z" fill="#e33b2e"/>
<path d="M308.300 706.600L315.228 702.600A8 8 0 0 1 308.300 714.600Z" fill="#f9c20a"/>
<path d="M308.300 706.600L308.300 714.600A8 8 0 0 1 301.372 702.600Z" fill="#2da94f"/>
<circle cx="308.300" cy="706.600" r="3.700" fill="#fff"/>
<circle cx="308.300" cy="706.600" r="2.900" fill="#4285f4"/>
</g>
<text class="task" x="319.200" y="709.600" textLength="74.100" lengthAdjust="spacingAndGlyphs">3D Printable KUNAİ...</text>
</g>

</svg>
</body>
</html>
